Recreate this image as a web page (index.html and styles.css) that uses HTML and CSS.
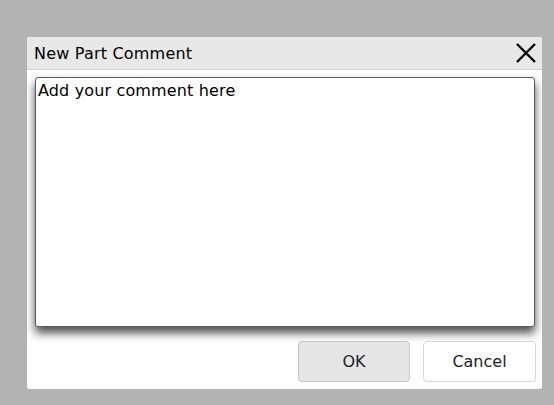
FILE: index.html
```html
<!DOCTYPE html>
<html>
<head>
<meta charset="utf-8">
<link rel="stylesheet" href="styles.css">
</head>
<body>
<div class="dialog">
  <div class="header">
    <span class="title">New Part Comment</span>
    <button class="close" aria-label="Close">
      <svg width="20" height="20" viewBox="0 0 20 20"><path d="M1 1 L19 19 M19 1 L1 19" stroke="#000" stroke-width="2.4" fill="none"/></svg>
    </button>
  </div>
  <div class="body">
    <div class="comment">Add your comment here</div>
  </div>
  <div class="footer">
    <button class="btn btn-ok">OK</button>
    <button class="btn btn-cancel">Cancel</button>
  </div>
</div>
</body>
</html>
```
FILE: styles.css
```css
html, body {
  margin: 0;
  padding: 0;
  background: #b3b3b3;
  height: 100%;
}
body {
  font-family: "DejaVu Sans", Verdana, sans-serif;
  padding: 37px 0 0 27px;
  box-sizing: border-box;
}
.dialog {
  width: 515px;
  height: 352px;
  background: #fff;
  border-radius: 2px;
  display: flex;
  flex-direction: column;
  overflow: hidden;
}
.header {
  height: 32px;
  background: #e8e8e8;
  border-bottom: 1px solid #d4d4d4;
  display: flex;
  align-items: center;
  justify-content: space-between;
  padding: 0 6px 0 7px;
}
.title {
  font-size: 16px;
  letter-spacing: 0.2px;
  color: #000;
}
.close {
  border: 0;
  background: none;
  padding: 0;
  width: 20px;
  height: 20px;
  display: flex;
}
.body {
  padding: 7px 7px 0 8px;
}
.comment {
  height: 250px;
  box-sizing: border-box;
  border: 1px solid #5a5a5a;
  border-radius: 3px;
  box-shadow: 0 6px 10px rgba(0,0,0,0.7);
  padding: 3px 2px;
  font-size: 16px;
  letter-spacing: 0.15px;
  color: #000;
  background: #fff;
}
.footer {
  display: flex;
  justify-content: flex-end;
  gap: 13px;
  padding: 14px 6px 0 0;
}
.btn {
  height: 41px;
  border-radius: 4px;
  font-family: "DejaVu Sans", Verdana, sans-serif;
  font-size: 16px;
  color: #222;
  padding: 0;
}
.btn-ok {
  width: 112px;
  background: #e6e6e6;
  border: 1px solid #c4c4c4;
}
.btn-cancel {
  width: 113px;
  background: #fff;
  border: 1px solid #d6d6d6;
}
```
